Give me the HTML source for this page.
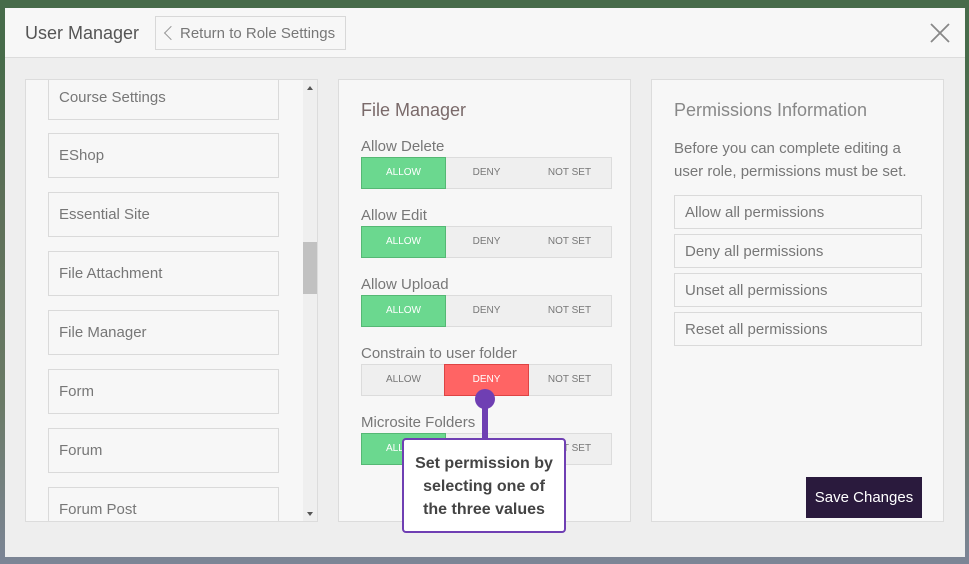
<!DOCTYPE html>
<html><head><style>
*{box-sizing:border-box;margin:0;padding:0}
body{width:969px;height:564px;overflow:hidden;position:relative;font-family:"Liberation Sans",sans-serif;background:linear-gradient(180deg,#476b4a 0,#476b4a 60px,#5d6f58 200px,#6a7a66 400px,#7c8596 564px);}
.modal{position:absolute;left:5px;top:8px;width:960px;height:549px;background:#eeeeee}
.hdr{position:absolute;left:0;top:0;width:960px;height:50px;background:#f7f7f7;border-bottom:1px solid #dcdcdc}
.t{position:absolute;left:20px;top:15px;font-size:18px;color:#555}
.ret{position:absolute;left:150px;top:8px;width:191px;height:34px;border:1px solid #d8d8d8;color:#777;font-size:15px;padding:8px 0 0 24px}
.ret:before{content:"";position:absolute;left:10px;top:11px;width:9px;height:9px;border-left:1px solid #999;border-bottom:1px solid #999;transform:rotate(45deg)}
.x{position:absolute;left:924px;top:14px;width:22px;height:22px}
.panel{position:absolute;top:71px;height:443px;background:#f7f7f7;border:1px solid #dcdcdc;overflow:hidden}
.item{position:absolute;left:22px;width:231px;height:45px;border:1px solid #dadada;font-size:15px;color:#777;padding:13px 0 0 10px}
.sb{position:absolute;left:277px;top:0;width:15px;height:443px;background:#efefef}
.h{position:absolute;font-size:18px;color:#888}
.lbl{position:absolute;left:22px;font-size:15px;color:#777}
.seg{position:absolute;left:22px;width:251px;height:32px;border:1px solid #dcdcdc;background:#efefef;display:flex;font-size:10px;color:#777}
.seg div{flex:1;text-align:center;line-height:30px}
.seg .a{background:#6bd88f;color:#fff;outline:1px solid #55b874}
.seg .d{background:#ff6464;color:#fff;outline:1px solid #d44}
.pb{position:absolute;left:22px;width:248px;height:34px;border:1px solid #dadada;font-size:15px;color:#777;padding:8px 0 0 10px}
.info{position:absolute;left:22px;top:57px;font-size:15px;color:#777;line-height:23px}
.save{position:absolute;left:154px;top:397px;width:116px;height:41px;background:#2a1a3d;color:#fff;font-size:15px;text-align:center;line-height:41px}
</style></head><body>
<div class="modal">
<div class="hdr"><div class="t">User Manager</div><div class="ret">Return to Role Settings</div>
<svg class="x" viewBox="0 0 22 22"><path d="M2 2L20 20M20 2L2 20" stroke="#888" stroke-width="1.8"/></svg></div>
<div class="panel" style="left:20px;width:293px">
<div class="item" style="top:-5px">Course Settings</div>
<div class="item" style="top:53px">EShop</div>
<div class="item" style="top:112px">Essential Site</div>
<div class="item" style="top:171px">File Attachment</div>
<div class="item" style="top:230px">File Manager</div>
<div class="item" style="top:289px">Form</div>
<div class="item" style="top:348px">Forum</div>
<div class="item" style="top:407px">Forum Post</div>
<div class="sb"><div style="position:absolute;left:0;top:162px;width:15px;height:52px;background:#c1c1c1"></div>
<div style="position:absolute;left:4px;top:6px;border:3.5px solid transparent;border-bottom:4px solid #555;border-top:0"></div>
<div style="position:absolute;left:4px;top:432px;border:3.5px solid transparent;border-top:4px solid #555;border-bottom:0"></div></div>
</div>
<div class="panel" style="left:333px;width:293px">
<div class="h" style="left:22px;top:20px;color:#7a6a6a">File Manager</div>
<div class="lbl" style="top:58px">Allow Delete</div><div class="seg" style="top:77px"><div class="a">ALLOW</div><div>DENY</div><div>NOT SET</div></div>
<div class="lbl" style="top:127px">Allow Edit</div><div class="seg" style="top:146px"><div class="a">ALLOW</div><div>DENY</div><div>NOT SET</div></div>
<div class="lbl" style="top:196px">Allow Upload</div><div class="seg" style="top:215px"><div class="a">ALLOW</div><div>DENY</div><div>NOT SET</div></div>
<div class="lbl" style="top:265px">Constrain to user folder</div><div class="seg" style="top:284px"><div>ALLOW</div><div class="d">DENY</div><div>NOT SET</div></div>
<div class="lbl" style="top:334px">Microsite Folders</div><div class="seg" style="top:353px"><div class="a">ALLOW</div><div>DENY</div><div>NOT SET</div></div>
</div>
<div class="panel" style="left:646px;width:293px">
<div class="h" style="left:22px;top:20px">Permissions Information</div>
<div class="info">Before you can complete editing a<br>user role, permissions must be set.</div>
<div class="pb" style="top:115px">Allow all permissions</div>
<div class="pb" style="top:154px">Deny all permissions</div>
<div class="pb" style="top:193px">Unset all permissions</div>
<div class="pb" style="top:232px">Reset all permissions</div>
<div class="save">Save Changes</div>
</div>
</div>
<div style="position:absolute;left:475px;top:389px;width:20px;height:20px;border-radius:50%;background:#6f3fb3"></div>
<div style="position:absolute;left:482px;top:400px;width:6px;height:40px;background:#6f3fb3"></div>
<div style="position:absolute;left:402px;top:438px;width:164px;height:95px;border:2px solid #6f3fb3;border-radius:4px;background:#fff;font-weight:bold;font-size:16px;color:#444;text-align:center;line-height:23px;padding-top:12px">Set permission by<br>selecting one of<br>the three values</div>
</body></html>
